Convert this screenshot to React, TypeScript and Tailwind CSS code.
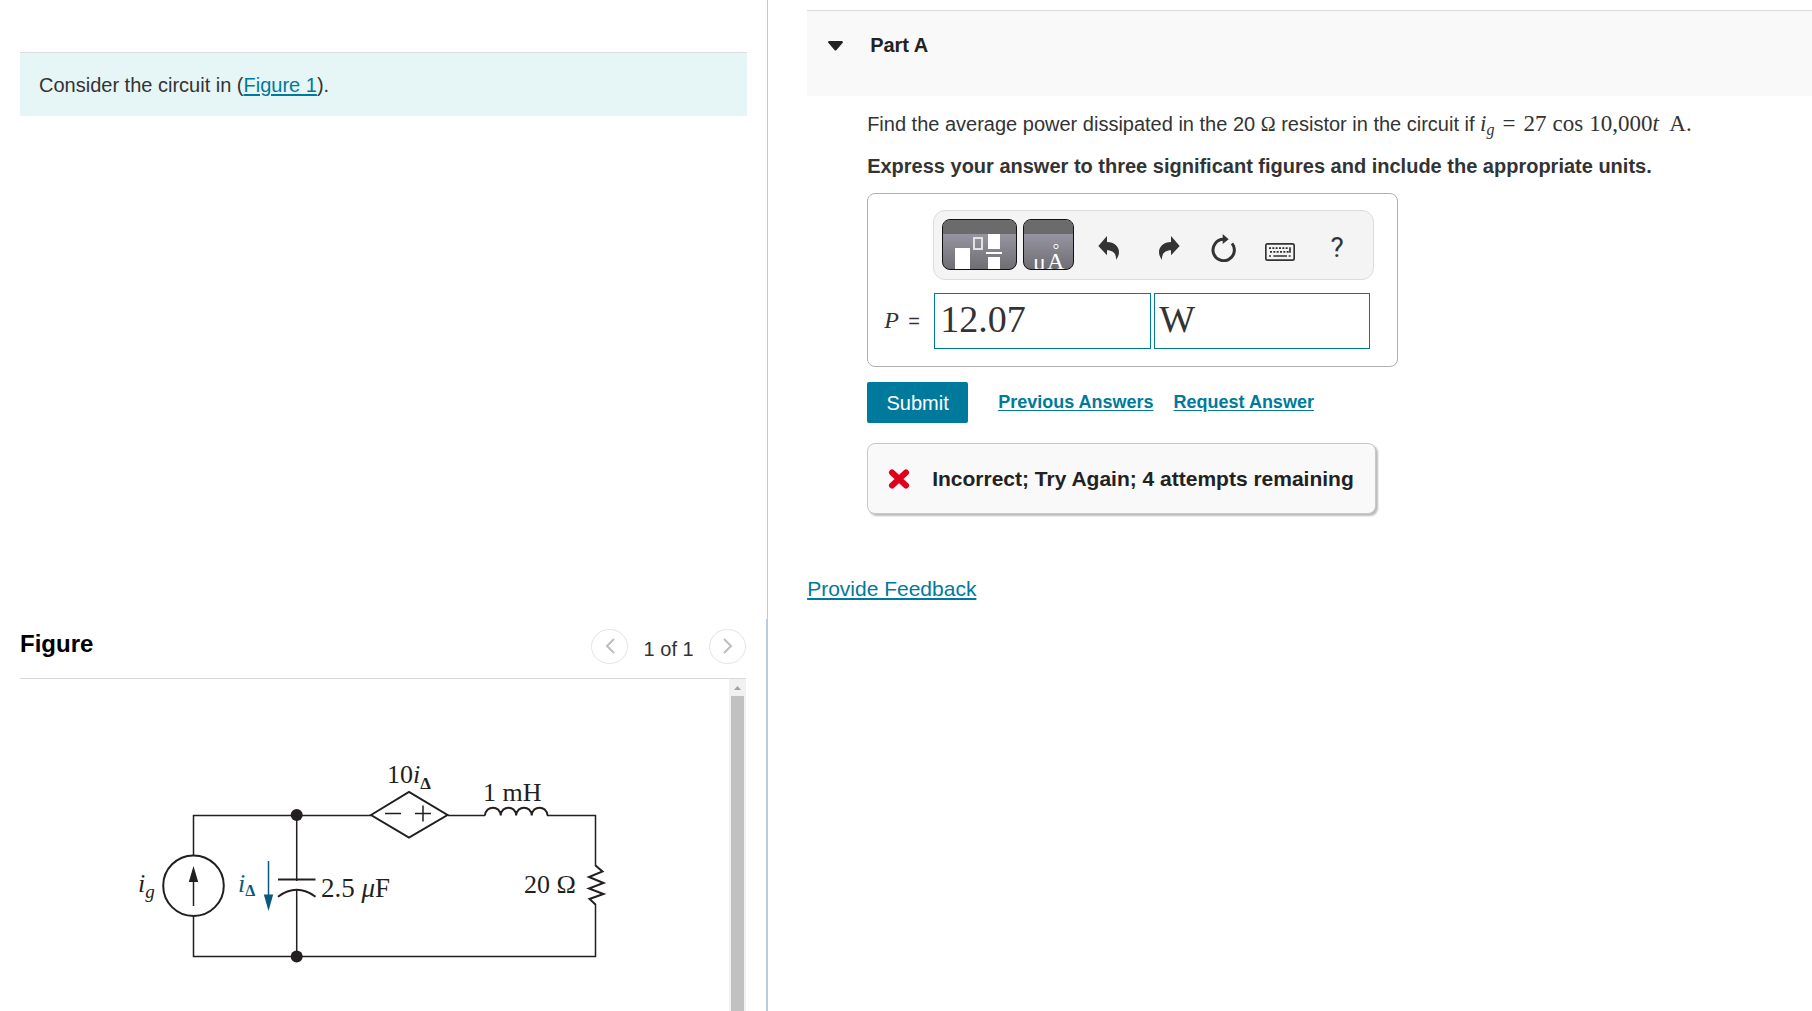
import type { ReactNode } from 'react'

const LINK = 'text-[#007a9c] underline underline-offset-2'

const Circuit = () => (
  <svg
    viewBox="130 750 480 220"
    className="block w-[480px] h-[220px] shrink-0"
    fill="none"
    stroke="#231f20"
    strokeWidth="1.5"
    role="img"
    aria-label="Circuit diagram"
  >
    {/* wires */}
    <path d="M193.5 855V815.5H371M448 815.5H485M547 815.5H595.5V866M595.5 904V956.5H193.5V916" />
    <path d="M296.7 815V881M296.7 889V956" />
    <circle cx="296.7" cy="815" r="6" fill="#231f20" stroke="none" />
    <circle cx="296.7" cy="956.5" r="6" fill="#231f20" stroke="none" />

    {/* current source */}
    <circle cx="193.5" cy="885.7" r="30.3" strokeWidth="2" />
    <path d="M193.5 906V880" />
    <path d="M193.5 866l4.7 16h-9.4z" fill="#231f20" stroke="none" />

    {/* capacitor */}
    <path d="M278 879.5H315.5M278 896.7Q296.7 883 315.5 896.7" strokeWidth="2" />
    <path d="M268.5 861V896" stroke="#0b5a7c" />
    <path d="M268.5 911l-4.7-16.5h9.4z" fill="#0b5a7c" stroke="none" />

    {/* dependent source */}
    <path d="M371 815L409 792L447.5 815L409 837.5Z" strokeWidth="2" />
    <path d="M385 813.5H401M415 813.5H431M423 805.5V821.5" />

    {/* inductor */}
    <path
      d="M485 815.5C486 805 500 805 500.7 815.5C501.5 805 515.5 805 516.2 815.5C517 805 531 805 531.7 815.5C532.5 805 546.5 805 547.5 815.5"
      strokeWidth="2"
    />

    {/* resistor */}
    <path d="M595.5 865.5L602.5 871.5L589 877L603.5 883L589 888.5L603.5 894L589.5 899L595.5 904.5" strokeWidth="2" />

    <g fill="#231f20" stroke="none" fontFamily="'Liberation Serif', serif" fontSize="26">
      <text x="387" y="783">10<tspan fontStyle="italic">i</tspan><tspan fontSize="17" dy="6" fontWeight="bold">Δ</tspan></text>
      <text x="483" y="801">1 mH</text>
      <text x="321" y="897" fontSize="27">2.5 <tspan fontStyle="italic">μ</tspan>F</text>
      <text x="524" y="893">20 Ω</text>
      <text x="138" y="892" fontStyle="italic">i<tspan fontSize="19" dy="6">g</tspan></text>
      <text x="238" y="892" fill="#0b5a7c" fontStyle="italic">i<tspan fontSize="16" dy="4" fontStyle="normal" fontWeight="bold">Δ</tspan></text>
    </g>
  </svg>
)

const PagerButton = ({ label, path }: { label: string; path: string }) => (
  <button
    type="button"
    aria-label={label}
    className="flex items-center justify-center w-[37px] h-[35px] rounded-[50%] border border-[#e6e6e6]"
  >
    <svg viewBox="0 0 10 16" className="w-[10px] h-4" fill="none" stroke="#bdbdbd" strokeWidth="2">
      <path d={path} />
    </svg>
  </button>
)

const TOOL_BUTTON = 'h-[51px] mb-[2px] shrink-0 rounded-lg border border-[#111] overflow-hidden bg-linear-to-b from-30% from-[#9694a0] to-[#6f6e73]'

const IconButton = ({ label, className, children }: { label: string; className: string; children: ReactNode }) => (
  <button type="button" aria-label={label} className={`flex items-center justify-center shrink-0 text-[#333] ${className}`}>
    {children}
  </button>
)

const ARROW = 'M0 30L26 0V18C48 18 62 32 62 48C62 58 58 64 53 72C55 56 46 43 26 43V58Z'

function Toolbar() {
  return (
    <div className="flex items-center w-[441px] h-[70px] pl-2 rounded-xl border border-[#dcdcdc] bg-[#f4f4f4]">
      <button type="button" aria-label="Templates" className={`w-[75px] ${TOOL_BUTTON}`}>
        <svg viewBox="0 0 73 49" className="block w-full h-full">
          <path d="M0 0h73v14H0z" fill="#6b6b6b" />
          <path d="M12 28h15v21H12zM45 14h12v15H45zM45 37h12v12H45zM43 32h16v2H43z" fill="#fff" />
          <path d="M31 18h8v11h-8z" fill="none" stroke="#e2e2e2" strokeWidth="2" />
        </svg>
      </button>
      <button type="button" aria-label="Units" className={`ml-[6px] w-[51px] ${TOOL_BUTTON}`}>
        <svg viewBox="0 0 49 49" className="block w-full h-full">
          <path d="M0 0h49v14H0z" fill="#6b6b6b" />
          <g fill="#fff" fontFamily="'Liberation Serif', serif" fontSize="24">
            <text x="9" y="50">μ</text>
            <text x="23" y="49">A</text>
          </g>
          <circle cx="32" cy="26.5" r="2.2" fill="none" stroke="#fff" />
        </svg>
      </button>
      <IconButton label="Undo" className="mt-[6px] ml-6 w-[22px] h-[24px]">
        <svg viewBox="0 0 64 72" className="w-[22px] h-6" fill="currentColor">
          <path d={ARROW} />
        </svg>
      </IconButton>
      <IconButton label="Redo" className="mt-[6px] ml-[38px] w-[22px] h-[24px]">
        <svg viewBox="0 0 64 72" className="w-[22px] h-6" fill="currentColor">
          <path d={ARROW} transform="translate(64 0) scale(-1 1)" />
        </svg>
      </IconButton>
      <IconButton label="Reset" className="mt-[6px] ml-[30px] w-[26px] h-[28px]">
        <svg viewBox="0 0 78 84" className="w-[26px] h-7">
          <path d="M66 28A32 32 0 1 1 40 16" fill="none" stroke="currentColor" strokeWidth="9" />
          <path d="M38 0L56 16L38 30Z" fill="currentColor" />
        </svg>
      </IconButton>
      <IconButton label="Keyboard shortcuts" className="mt-[14px] ml-[29px] w-[30px] h-[18px]">
        <svg viewBox="0 0 90 54" className="w-[30px] h-[18px]" fill="none" stroke="currentColor">
          <rect x="2.5" y="2.5" width="85" height="49" rx="5" strokeWidth="5" />
          <path d="M12 15.5H72M15 26.5H72M12 39H18M71 39H77" strokeWidth="5" strokeDasharray="6 4" />
          <path d="M25 39H66M75 13V29" strokeWidth="5" />
        </svg>
      </IconButton>
      <IconButton label="Help" className="mt-[6px] ml-[30px] w-[24px] h-[40px] font-['Roboto',sans-serif] text-[28px]">
        ?
      </IconButton>
    </div>
  )
}

const FIELD =
  "h-[56px] border border-[#007a9c] bg-white pb-1 font-['Liberation_Serif',serif] text-[38px] text-[#333] outline-none"

function AnswerBox() {
  return (
    <div className="w-[531px] h-[174px] mt-3 pt-4 pl-4 rounded-lg border border-[#b0b0b0]">
      <div className="ml-[49px]">
        <Toolbar />
      </div>
      <div className="flex items-center mt-[13px]">
        <label htmlFor="value" className="w-[50px] shrink-0 pb-[2px] text-[20px]">
          <i className="mr-1 font-['Liberation_Serif',serif] text-[24px]">P</i> =
        </label>
        <input id="value" defaultValue="12.07" className={`${FIELD} pl-[5px] w-[217px]`} />
        <input aria-label="Units" defaultValue="W" className={`${FIELD} ml-[3px] pl-1 w-[216px]`} />
      </div>
    </div>
  )
}

function Problem() {
  return (
    <aside className="grid grid-rows-[30fr_19fr] min-h-0">
      <div className="border-r border-[#b9cbdf] pt-[52px] pl-5 pr-5">
        <p className="h-16 pt-[17px] pl-[19px] border-t border-[#d9dedd] bg-[#e6f5f6] text-[20px] leading-[30px]">
          Consider the circuit in (<a href="#figure" className={LINK}>Figure 1</a>).
        </p>
      </div>
      <section id="figure" className="flex flex-col min-h-0 border-r-2 border-[#b9cbdf] pl-5 pr-5">
        <div className="flex h-[60px] shrink-0 border-b border-[#d9d9d9]">
          <h2 className="mt-2 text-[24px] leading-[34px] font-bold text-black">Figure</h2>
          <div className="flex items-center ml-auto h-[35px] mt-[10px]">
            <PagerButton label="Previous figure" path="M9 1L2 8L9 15" />
            <span className="w-[81px] pt-[6px] text-center text-[20px]">1 of 1</span>
            <PagerButton label="Next figure" path="M1 1L8 8L1 15" />
          </div>
        </div>
        <div className="flex flex-1 min-h-0 overflow-hidden">
          <div className="flex-1 min-w-0 pt-[71px] pl-[110px]">
            <Circuit />
          </div>
          <div className="flex flex-col items-center w-[17px] bg-[#f1f1f1]">
            <svg viewBox="0 0 7 4" className="mt-[7px] mb-[6px] w-[7px] h-1 shrink-0">
              <path d="M0 4L3.5 0L7 4Z" fill="#a3a3a3" />
            </svg>
            <div className="flex-1 w-[13px] bg-[#c1c1c1]" />
          </div>
        </div>
      </section>
    </aside>
  )
}

function PartA() {
  return (
    <main className="min-w-0 pl-[39px] pt-[10px]">
      <button type="button" className="flex w-full h-[86px] pl-[21px] pt-[19px] border-t border-[#dadada] bg-[#f9f9f9] text-[#222]">
        <svg viewBox="0 0 15 10" className="w-[15px] h-[10px] mt-[11px]" fill="currentColor">
          <path d="M1 0H14Q15.5 1 14.5 2L8.5 9Q7.5 10 6.5 9L0.5 2Q-0.5 1 1 0Z" />
        </svg>
        <span className="ml-[27px] text-[20px] leading-[30px] font-bold">Part A</span>
      </button>
      <div className="pl-[60px]">
        <p className="mt-[13px] text-[20px] leading-[30px] whitespace-nowrap">
          Find the average power dissipated in the 20 <span className="font-['Liberation_Serif',serif]">Ω</span> resistor in the circuit if{' '}
          <span className="font-['Liberation_Serif',serif] text-[23px] leading-[20px]">
            <i>i</i>
            <sub className="text-[16px]"><i>g</i></sub>
            <span className="mx-2">=</span>27
            <span className="mx-[6px]">cos</span>10,000<i className="mr-[6px]">t</i> A.
          </span>
        </p>
        <p className="mt-3 text-[20px] leading-[30px] font-bold">
          Express your answer to three significant figures and include the appropriate units.
        </p>
        <AnswerBox />
        <div className="flex items-center mt-[15px] text-[18px] font-bold">
          <button type="button" className="w-[101px] h-[41px] rounded-xs bg-[#007a9c] text-[20px] font-normal text-white">
            Submit
          </button>
          <a href="#previous" className={`ml-[30px] ${LINK}`}>Previous Answers</a>
          <a href="#request" className={`ml-5 ${LINK}`}>Request Answer</a>
        </div>
        <div className="flex items-center w-fit h-[71px] mt-5 pl-5 pr-[21px] rounded-lg border border-[#c8c8c8] bg-[#f9f9f9] shadow-[2px_2px_2px_#bbb]">
          <svg viewBox="0 0 22 20" className="w-[22px] h-5" stroke="#e0001b" strokeWidth="6" strokeLinecap="round">
            <path d="M4 3.5L18 16.5M18 3.5L4 16.5" />
          </svg>
          <span className="ml-[22px] text-[21px] font-bold text-[#222]">Incorrect; Try Again; 4 attempts remaining</span>
        </div>
      </div>
      <a href="#feedback" className={`inline-block mt-[60px] text-[21px] leading-[30px] ${LINK}`}>Provide Feedback</a>
    </main>
  )
}

export default function App() {
  return (
    <div className="grid grid-cols-[39fr_53fr] h-screen overflow-hidden bg-white text-[#333] font-['Liberation_Sans',Arial,sans-serif]">
      <Problem />
      <PartA />
    </div>
  )
}
